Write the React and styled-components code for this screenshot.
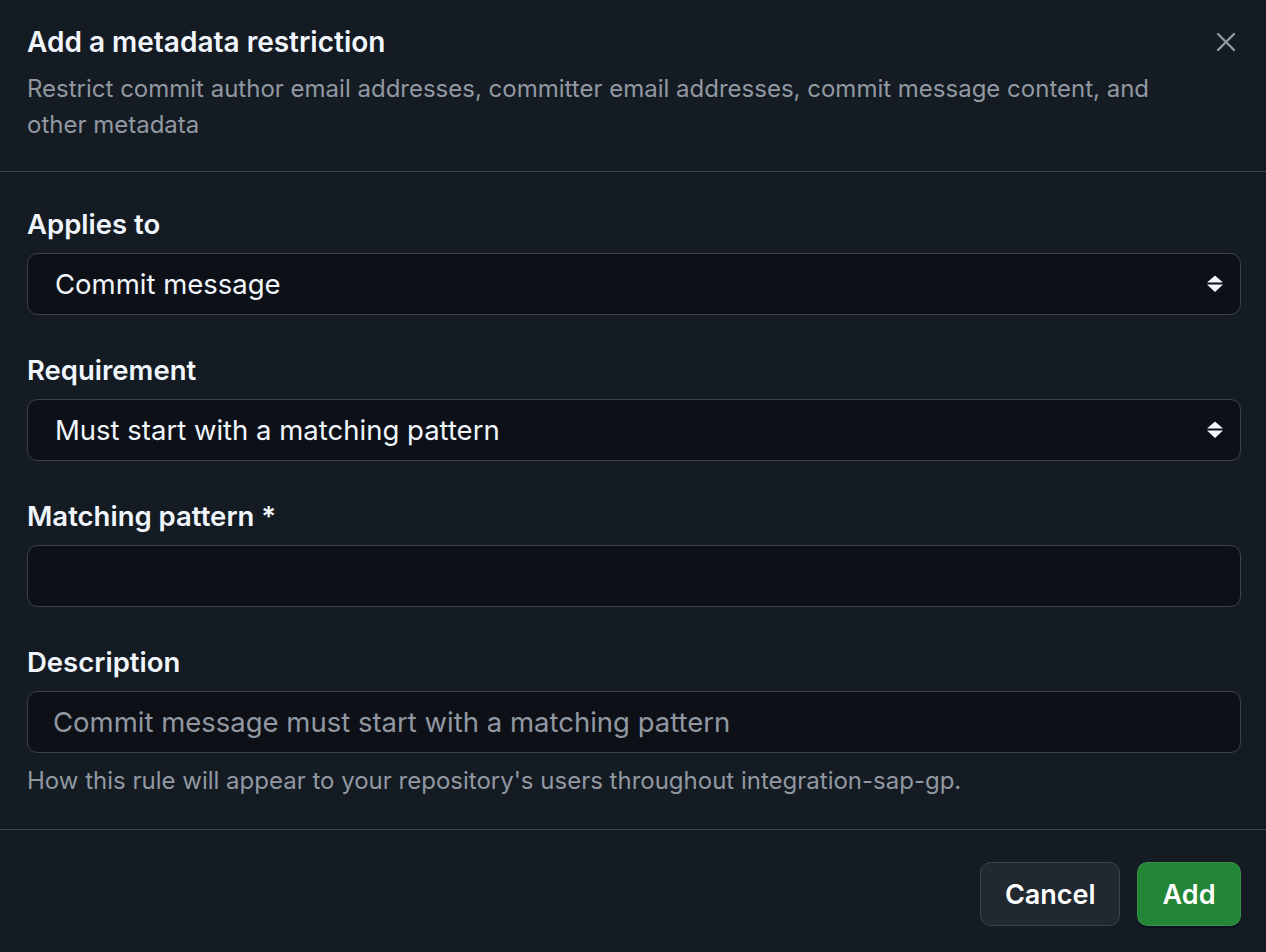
import React from 'react'
import styled, { createGlobalStyle } from 'styled-components'

const GlobalStyle = createGlobalStyle`
  html, body {
    margin: 0;
    padding: 0;
    background: #151b23;
  }
  body {
    font-family: Inter, "Noto Sans", "Liberation Sans", sans-serif;
    color: #f0f6fc;
    -webkit-font-smoothing: antialiased;
  }
`

const Dialog = styled.div`
  width: 1266px;
  min-height: 952px;
  display: flex;
  flex-direction: column;
  background: #151b23;
  box-sizing: border-box;
`

const Header = styled.header`
  display: flex;
  align-items: flex-start;
  justify-content: space-between;
  padding: 24px 25px 28px 27px;
  border-bottom: 1px solid #3d444d;
`

const HeaderText = styled.div`
  display: flex;
  flex-direction: column;
  gap: 11px;
  max-width: 1140px;
`

const Title = styled.h1`
  margin: 0;
  font-size: 28px;
  line-height: 36px;
  font-weight: 600;
  color: #f0f6fc;
`

const Subtitle = styled.p`
  margin: 0;
  font-size: 24px;
  line-height: 36px;
  color: #9198a1;
`

const CloseButton = styled.button`
  width: 40px;
  height: 40px;
  margin-top: -2px;
  margin-right: -5px;
  display: flex;
  align-items: center;
  justify-content: center;
  border: 0;
  background: transparent;
  color: #9198a1;
  padding: 0;
  cursor: pointer;
`

const Body = styled.div`
  display: flex;
  flex-direction: column;
  gap: 38px;
  padding: 35px 25px 31px 27px;
  border-bottom: 1px solid #3d444d;
`

const Field = styled.div`
  display: flex;
  flex-direction: column;
`

const Label = styled.label`
  font-size: 27.5px;
  line-height: 35px;
  font-weight: 600;
  color: #f0f6fc;
  margin-bottom: 11px;
`

const Control = styled.div`
  position: relative;
  height: 62px;
  box-sizing: border-box;
  display: flex;
  align-items: center;
  padding: 0 ${p => (p.$select ? '60px' : '26px')} 0 ${p => (p.$select ? '27px' : '25px')};
  background: #0d1117;
  border: 1px solid #3d444d;
  border-radius: 10.5px;
  font-size: 27.5px;
  color: ${p => (p.$placeholder ? '#9198a1' : '#f0f6fc')};
`

const Caret = styled.svg`
  position: absolute;
  right: 17px;
  top: 50%;
  transform: translateY(-50%);
`

const Hint = styled.div`
  margin-top: 10px;
  font-size: 24px;
  line-height: 35px;
  color: #9198a1;
`

const Footer = styled.footer`
  display: flex;
  justify-content: flex-end;
  gap: 17px;
  padding: 32px 25px 26px 27px;
`

const Button = styled.button`
  height: 64px;
  padding: 0 ${p => (p.$primary ? '24.5px' : '23.5px')};
  border-radius: 10.5px;
  font-family: inherit;
  font-size: 27px;
  font-weight: 600;
  color: #ffffff;
  background: ${p => (p.$primary ? '#238636' : '#212830')};
  border: 1.75px solid ${p => (p.$primary ? 'rgba(240,246,252,0.1)' : '#3d444d')};
  box-shadow: ${p => (p.$primary ? '0 2px 0 rgba(1,4,9,0.4)' : 'none')};
  cursor: pointer;
`

const SelectCaret = () => (
  <Caret width='16' height='17' viewBox='0 0 16 17'>
    <path d='M8 0 L16 7 L0 7 Z M0 9 L16 9 L8 16.5 Z' fill='#f0f6fc' />
  </Caret>
)

const SelectBox = ({ value }) => (
  <Control $select>
    {value}
    <SelectCaret />
  </Control>
)

const App = () => {
  return (
    <>
      <GlobalStyle />
      <Dialog>
        <Header>
          <HeaderText>
            <Title>Add a metadata restriction</Title>
            <Subtitle>
              Restrict commit author email addresses, committer email addresses, commit message content, and other metadata
            </Subtitle>
          </HeaderText>
          <CloseButton aria-label='Close'>
            <svg width='20' height='20' viewBox='0 0 20 20'>
              <path d='M2 2 L18 18 M18 2 L2 18' stroke='currentColor' strokeWidth='2.4' strokeLinecap='round' />
            </svg>
          </CloseButton>
        </Header>
        <Body>
          <Field>
            <Label>Applies to</Label>
            <SelectBox value='Commit message' />
          </Field>
          <Field>
            <Label>Requirement</Label>
            <SelectBox value='Must start with a matching pattern' />
          </Field>
          <Field>
            <Label>Matching pattern *</Label>
            <Control />
          </Field>
          <Field>
            <Label>Description</Label>
            <Control $placeholder>Commit message must start with a matching pattern</Control>
            <Hint>How this rule will appear to your repository's users throughout integration-sap-gp.</Hint>
          </Field>
        </Body>
        <Footer>
          <Button>Cancel</Button>
          <Button $primary>Add</Button>
        </Footer>
      </Dialog>
    </>
  )
}

export default App
